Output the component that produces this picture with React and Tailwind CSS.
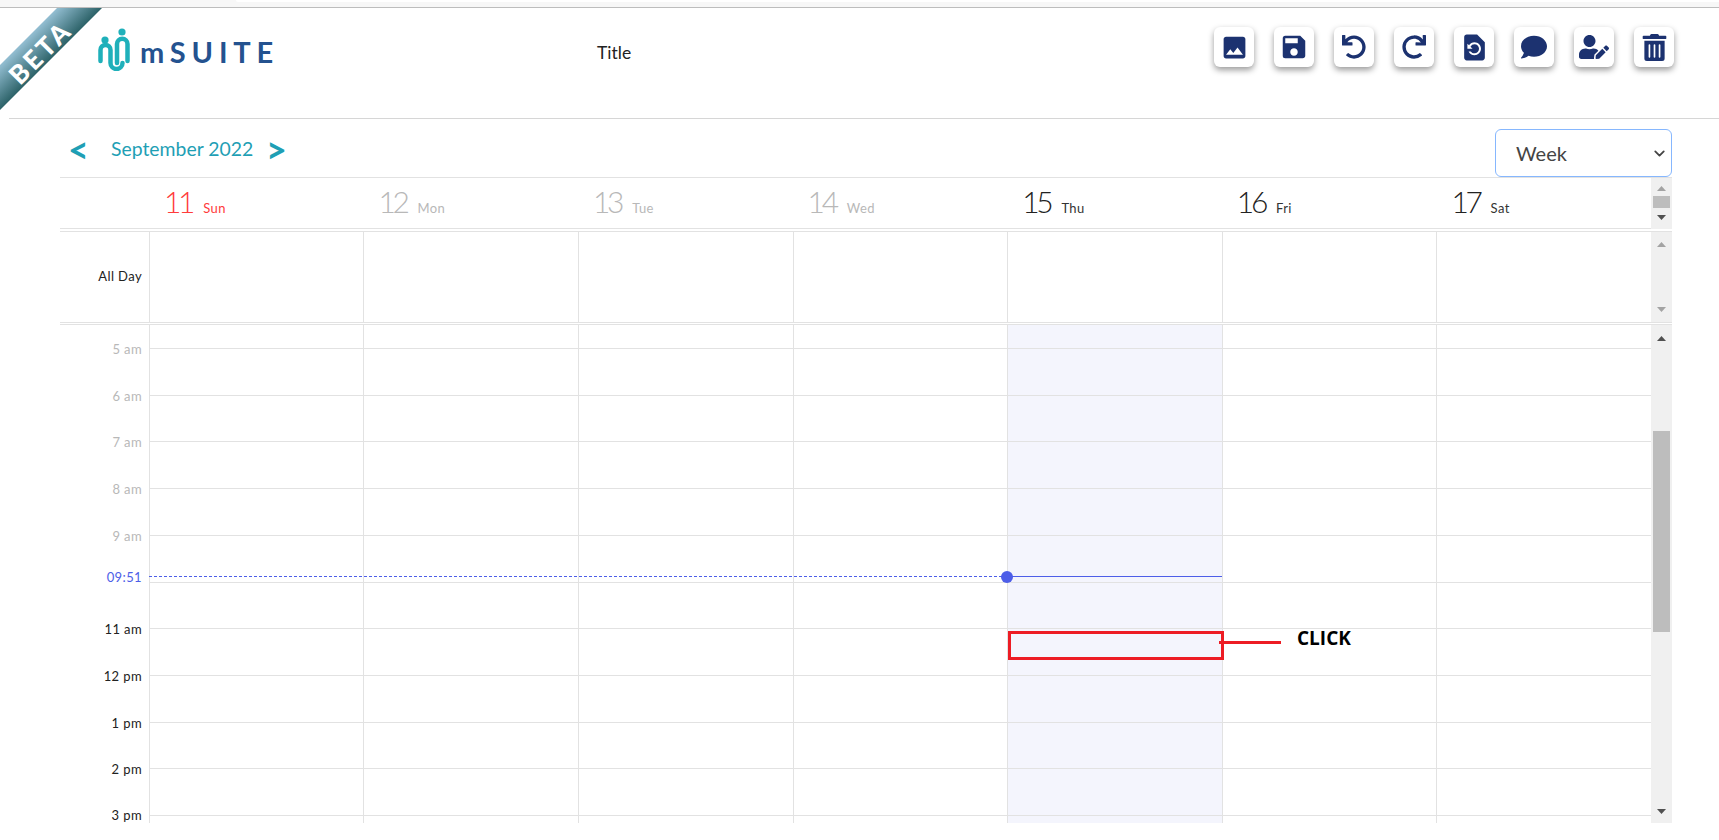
import { ChevronDown } from "lucide-react";
import { FaComment, FaRedo, FaTrashAlt, FaUndo, FaUserEdit } from "react-icons/fa";
import { MdImage, MdRestorePage, MdSave } from "react-icons/md";

const days = [
  { num: 11, name: "Sun", numClass: "text-[#ff3b3b]", nameClass: "text-[#ff3b3b]" },
  { num: 12, name: "Mon", numClass: "text-[#b8b8b8]", nameClass: "text-[#b8b8b8]" },
  { num: 13, name: "Tue", numClass: "text-[#b8b8b8]", nameClass: "text-[#b8b8b8]" },
  { num: 14, name: "Wed", numClass: "text-[#b8b8b8]", nameClass: "text-[#b8b8b8]" },
  { num: 15, name: "Thu", numClass: "text-[#222222]", nameClass: "text-[#333333]" },
  { num: 16, name: "Fri", numClass: "text-[#222222]", nameClass: "text-[#333333]" },
  { num: 17, name: "Sat", numClass: "text-[#222222]", nameClass: "text-[#333333]" },
];

const hours = [
  { label: "5 am", past: true },
  { label: "6 am", past: true },
  { label: "7 am", past: true },
  { label: "8 am", past: true },
  { label: "9 am", past: true },
  { label: "" },
  { label: "11 am" },
  { label: "12 pm" },
  { label: "1 pm" },
  { label: "2 pm" },
];

const tools = [
  { icon: MdImage, size: 29 },
  { icon: MdSave, size: 30 },
  { icon: FaUndo, size: 24 },
  { icon: FaRedo, size: 24 },
  { icon: MdRestorePage, size: 31 },
  { icon: FaComment, size: 26 },
  { icon: FaUserEdit, size: 30 },
  { icon: FaTrashAlt, size: 27 },
];

function Arrow({ down, dark }) {
  return (
    <svg width="9" height="5" viewBox="0 0 9 5" className={dark ? "text-[#505050]" : "text-[#a3a3a3]"}>
      <path d={down ? "M0 0h9L4.5 5z" : "M4.5 0L9 5H0z"} fill="currentColor" />
    </svg>
  );
}

function Logo() {
  return (
    <div className="flex items-center h-[42px]">
      <svg width="32" height="43" viewBox="0 0 32 43">
        <circle cx="7" cy="12" r="3.6" fill="#1fb0ba" />
        <circle cx="24" cy="4" r="3.6" fill="#1fb0ba" />
        <path
          d="M2.5 33V22a5 5 0 0 1 10 0V35a6 6 0 0 0 12 0"
          fill="none"
          stroke="#1fb0ba"
          strokeWidth="4.5"
          strokeLinecap="round"
        />
        <path d="M19 35V16a5.25 5.25 0 0 1 10.5 0V33" fill="none" stroke="#1fb0ba" strokeWidth="4.5" strokeLinecap="round" />
      </svg>
      <span className="ml-[10px] mt-[5px] text-[29px] leading-none font-bold tracking-[0.2em] text-[#24528f]">mSUITE</span>
    </div>
  );
}

function DayCells({ shaded }) {
  return (
    <div className="grid flex-1 grid-cols-[214.4px_repeat(6,1fr)]">
      {days.map((d) => (
        <div key={d.num} className={`border-l border-[#e2e2e2] ${shaded && d.num === 15 ? "bg-[#f4f5fd]" : ""}`} />
      ))}
    </div>
  );
}

export default function App() {
  return (
    <div className="relative h-[840px] w-full overflow-hidden bg-white font-['Lato','Liberation_Sans',sans-serif]">
      {/* browser strip */}
      <div className="h-[8px] border-b border-[#bdbdbd] bg-[#f7f7f7] pl-[236px]">
        <div className="h-[2px] rounded-bl-md bg-white" />
      </div>

      {/* ribbon */}
      <div className="absolute left-0 top-[8px] h-[102px] w-[102px] bg-[linear-gradient(135deg,#93bed2_28%,#2c6268_50%)] [clip-path:polygon(57px_0,102px_0,0_102px,0_57px)]">
        <span className="absolute left-[40px] top-[44px] -translate-x-1/2 -translate-y-1/2 -rotate-45 text-[26px] leading-none font-black tracking-[0.12em] text-white">
          BETA
        </span>
      </div>

      {/* header */}
      <div className="flex h-[110px] items-start pl-[98px] pr-[45px]">
        <div className="mt-[20px] w-[499px]">
          <Logo />
        </div>
        <div className="mt-[34px] flex-1 text-[17.5px] leading-[22px] text-[#222222]">Title</div>
        <div className="mt-[19px] flex gap-[20px]">
          {tools.map(({ icon: Icon, size }, i) => (
            <button
              key={i}
              className="flex h-[40px] w-[40px] items-center justify-center rounded-md bg-white text-[#1c3270] shadow-[0_3px_6px_rgba(0,0,0,0.4)]"
            >
              <Icon size={size} />
            </button>
          ))}
        </div>
      </div>
      <div className="ml-[9px] h-px bg-[#d6d6d6]" />

      {/* month nav */}
      <div className="flex h-[58px] items-start justify-between pl-[60px] pr-[47px]">
        <div className="mt-[16px] flex items-center text-[#1f9fb5]">
          <span className="w-[51px] pl-[8px] text-[36px] leading-[28px] font-bold">&lt;</span>
          <span className="w-[155px] text-[19.4px] leading-[28px]">September 2022</span>
          <span className="text-[36px] leading-[28px] font-bold">&gt;</span>
        </div>
        <div className="mt-[10px] flex h-[48px] w-[177px] items-center justify-between rounded-md border border-[#86b7fe] pl-[20px] pr-[3px] text-[#444444]">
          <span className="text-[20px]">Week</span>
          <ChevronDown size={17} strokeWidth={2.5} />
        </div>
      </div>

      {/* calendar */}
      <div className="relative ml-[60px] w-[1612px]">
        <div className="flex h-[52px] border-t border-[#e2e2e2]">
          <div className="flex flex-1 border-b border-[#e2e2e2] pl-[89px]">
            <div className="grid flex-1 grid-cols-[214.4px_repeat(6,1fr)]">
              {days.map((d) => (
                <div key={d.num} className="flex items-baseline gap-[11px] pl-[15px] pt-[3px]">
                  <span className={`text-[30px] leading-[40px] font-light tracking-[-0.11em] ${d.numClass}`}>{d.num}</span>
                  <span className={`text-[13px] tracking-[0.03em] ${d.nameClass}`}>{d.name}</span>
                </div>
              ))}
            </div>
          </div>
          <div className="flex w-[21px] flex-col items-center bg-[#f0f0f0] pt-[8px]">
            <Arrow />
            <div className="mt-[5px] h-[12px] w-[17px] bg-[#bdbdbd]" />
            <div className="mt-[7px]">
              <Arrow down dark />
            </div>
          </div>
        </div>

        <div className="mt-[2px] flex h-[92px] border-y border-[#e2e2e2]">
          <div className="flex w-[89px] items-center justify-end pr-[7px] text-[13px] text-[#222222] tracking-[0.03em]">All Day</div>
          <DayCells />
          <div className="flex w-[21px] flex-col items-center justify-between bg-[#f0f0f0] py-[10px]">
            <Arrow />
            <Arrow down />
          </div>
        </div>

        <div className="relative mt-px flex h-[499px] border-t border-[#e2e2e2]">
          <div className="flex flex-1 flex-col">
            <div className="flex h-[23.15px]">
              <div className="w-[89px]" />
              <DayCells shaded />
            </div>
            {hours.map((h, i) => (
              <div key={i} className="flex h-[46.9px]">
                <div className="flex w-[89px] items-start justify-end pr-[7px]">
                  <span
                    className={`-mt-[8px] text-[13px] leading-[18px] tracking-[0.03em] ${h.past ? "text-[#b8b8b8]" : "text-[#222222]"}`}
                  >
                    {h.label}
                  </span>
                </div>
                <div className="flex flex-1 border-t border-[#e2e2e2]">
                  <DayCells shaded />
                </div>
              </div>
            ))}
            <div className="flex flex-1">
              <div className="flex w-[89px] items-start justify-end pr-[7px]">
                <span className="-mt-[7px] text-[13px] leading-[15px] tracking-[0.03em] text-[#222222]">3 pm</span>
              </div>
              <div className="flex flex-1 border-t border-[#e2e2e2]">
                <DayCells shaded />
              </div>
            </div>
          </div>
          <div className="flex w-[21px] flex-col items-center bg-[#f0f0f0] pb-[9px] pt-[11px]">
            <Arrow dark />
            <div className="mt-[90px] h-[201px] w-[17px] bg-[#bdbdbd]" />
            <div className="flex-1" />
            <Arrow down dark />
          </div>

          {/* now marker */}
          <span className="absolute right-[1530px] top-[243px] text-[13px] leading-[18px] tracking-[0.03em] text-[#4d5ee8]">09:51</span>
          <div className="absolute left-[89px] top-[251px] w-[858px] border-t border-dashed border-[#4d5ee8]" />
          <div className="absolute left-[947px] top-[251px] h-px w-[215px] bg-[#4d5ee8]" />
          <div className="absolute left-[941px] top-[246px] h-[12px] w-[12px] rounded-full bg-[#4d5ee8]" />

          {/* annotation */}
          <div className="absolute left-[948px] top-[306px] h-[29px] w-[216px] border-[3px] border-[#ed1c24]" />
          <div className="absolute left-[1159px] top-[316px] h-[3px] w-[62px] bg-[#ed1c24]" />
          <span className="absolute left-[1237px] top-[301px] font-['Open_Sans',sans-serif] text-[19px] leading-[24px] font-bold text-black">
            CLICK
          </span>
        </div>
      </div>
    </div>
  );
}
